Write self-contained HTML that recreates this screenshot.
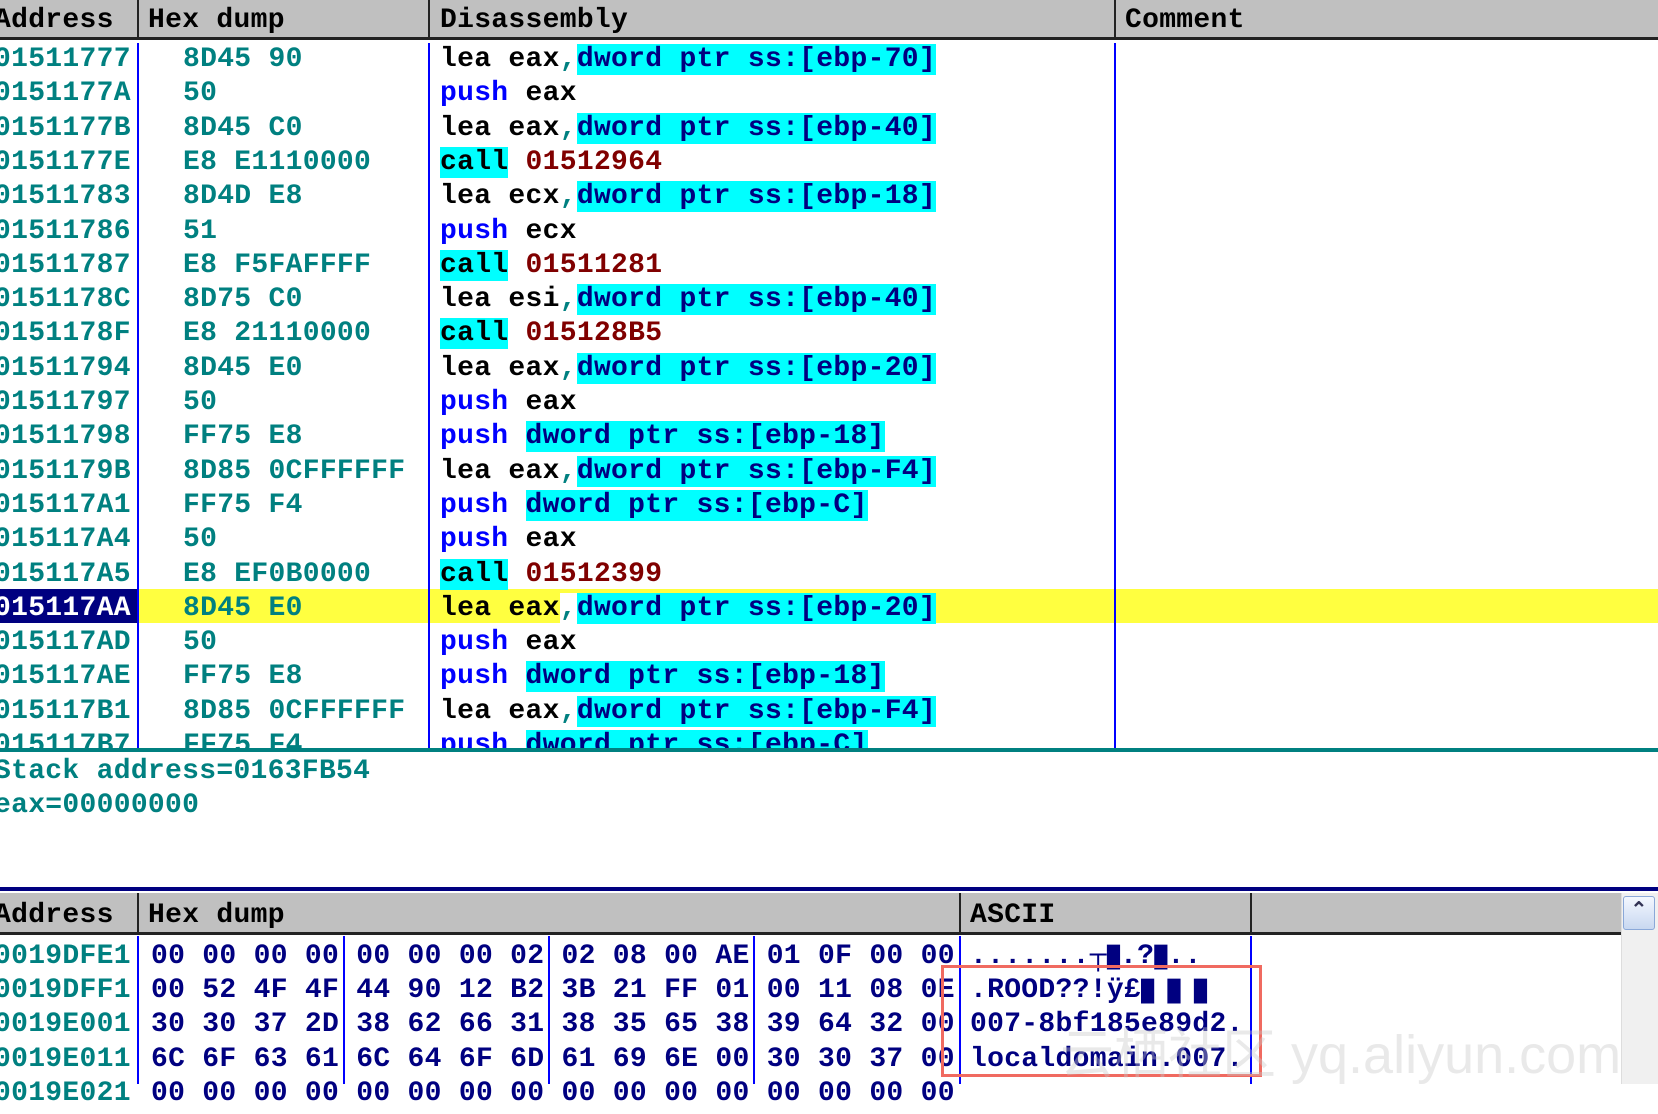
<!DOCTYPE html>
<html><head><meta charset="utf-8"><style>
*{margin:0;padding:0;box-sizing:border-box}
body{width:1658px;height:1084px;overflow:hidden;background:#fff;position:relative;font-family:"Liberation Mono",monospace;font-weight:bold;font-size:28px;letter-spacing:0.3px}
.a{position:absolute;white-space:pre;line-height:40px;height:34px}
.t{color:#008080}.k{color:#000}.b{color:#0000ff}.n{color:#000080}.r{color:#800000}
.c{background:#00ffff;color:#000080}.cc{background:#00ffff;color:#000}
.v{position:absolute;width:2px;background:#0000ff}
.hdr{position:absolute;background:#c0c0c0;height:40px;border-bottom:3px solid #222}
.hs{position:absolute;top:0;width:2px;background:#222}
.blk{font-size:22px;letter-spacing:0}
</style></head><body>
<div class="hdr" style="left:0;top:0;width:1658px"></div>
<div class="hs" style="left:137px;height:40px"></div>
<div class="hs" style="left:428px;height:40px"></div>
<div class="hs" style="left:1114px;height:40px"></div>
<div class="a k" style="left:-6px;top:1px">Address</div>
<div class="a k" style="left:148px;top:1px">Hex dump</div>
<div class="a k" style="left:440px;top:1px">Disassembly</div>
<div class="a k" style="left:1125px;top:1px">Comment</div>
<div style="position:absolute;left:0;top:589px;width:138px;height:34px;background:#000080"></div>
<div style="position:absolute;left:138px;top:589px;width:1520px;height:34px;background:#ffff40"></div>
<div class="v" style="left:137px;top:43px;height:706px"></div>
<div class="v" style="left:428px;top:43px;height:706px"></div>
<div class="v" style="left:1114px;top:43px;height:706px"></div>
<div style="position:absolute;left:0;top:43px;width:1658px;height:706px;overflow:hidden">
<div style="position:relative;top:-43px">
<div class="a t" style="left:-6px;top:40px">01511777</div><div class="a t" style="left:183px;top:40px">8D45 90</div><div class="a k" style="left:440px;top:40px">lea eax<span class="t">,</span><span class="c">dword ptr ss:[ebp-70]</span></div>
<div class="a t" style="left:-6px;top:74px">0151177A</div><div class="a t" style="left:183px;top:74px">50</div><div class="a k" style="left:440px;top:74px"><span class="b">push</span> eax</div>
<div class="a t" style="left:-6px;top:109px">0151177B</div><div class="a t" style="left:183px;top:109px">8D45 C0</div><div class="a k" style="left:440px;top:109px">lea eax<span class="t">,</span><span class="c">dword ptr ss:[ebp-40]</span></div>
<div class="a t" style="left:-6px;top:143px">0151177E</div><div class="a t" style="left:183px;top:143px">E8 E1110000</div><div class="a k" style="left:440px;top:143px"><span class="cc">call</span> <span class="r">01512964</span></div>
<div class="a t" style="left:-6px;top:177px">01511783</div><div class="a t" style="left:183px;top:177px">8D4D E8</div><div class="a k" style="left:440px;top:177px">lea ecx<span class="t">,</span><span class="c">dword ptr ss:[ebp-18]</span></div>
<div class="a t" style="left:-6px;top:212px">01511786</div><div class="a t" style="left:183px;top:212px">51</div><div class="a k" style="left:440px;top:212px"><span class="b">push</span> ecx</div>
<div class="a t" style="left:-6px;top:246px">01511787</div><div class="a t" style="left:183px;top:246px">E8 F5FAFFFF</div><div class="a k" style="left:440px;top:246px"><span class="cc">call</span> <span class="r">01511281</span></div>
<div class="a t" style="left:-6px;top:280px">0151178C</div><div class="a t" style="left:183px;top:280px">8D75 C0</div><div class="a k" style="left:440px;top:280px">lea esi<span class="t">,</span><span class="c">dword ptr ss:[ebp-40]</span></div>
<div class="a t" style="left:-6px;top:314px">0151178F</div><div class="a t" style="left:183px;top:314px">E8 21110000</div><div class="a k" style="left:440px;top:314px"><span class="cc">call</span> <span class="r">015128B5</span></div>
<div class="a t" style="left:-6px;top:349px">01511794</div><div class="a t" style="left:183px;top:349px">8D45 E0</div><div class="a k" style="left:440px;top:349px">lea eax<span class="t">,</span><span class="c">dword ptr ss:[ebp-20]</span></div>
<div class="a t" style="left:-6px;top:383px">01511797</div><div class="a t" style="left:183px;top:383px">50</div><div class="a k" style="left:440px;top:383px"><span class="b">push</span> eax</div>
<div class="a t" style="left:-6px;top:417px">01511798</div><div class="a t" style="left:183px;top:417px">FF75 E8</div><div class="a k" style="left:440px;top:417px"><span class="b">push</span> <span class="c">dword ptr ss:[ebp-18]</span></div>
<div class="a t" style="left:-6px;top:452px">0151179B</div><div class="a t" style="left:183px;top:452px">8D85 0CFFFFFF</div><div class="a k" style="left:440px;top:452px">lea eax<span class="t">,</span><span class="c">dword ptr ss:[ebp-F4]</span></div>
<div class="a t" style="left:-6px;top:486px">015117A1</div><div class="a t" style="left:183px;top:486px">FF75 F4</div><div class="a k" style="left:440px;top:486px"><span class="b">push</span> <span class="c">dword ptr ss:[ebp-C]</span></div>
<div class="a t" style="left:-6px;top:520px">015117A4</div><div class="a t" style="left:183px;top:520px">50</div><div class="a k" style="left:440px;top:520px"><span class="b">push</span> eax</div>
<div class="a t" style="left:-6px;top:555px">015117A5</div><div class="a t" style="left:183px;top:555px">E8 EF0B0000</div><div class="a k" style="left:440px;top:555px"><span class="cc">call</span> <span class="r">01512399</span></div>
<div class="a" style="left:-6px;top:589px;color:#fff">015117AA</div><div class="a t" style="left:183px;top:589px">8D45 E0</div><div class="a k" style="left:440px;top:589px">lea eax<span class="t" style="background:#fff">,</span><span class="c">dword ptr ss:[ebp-20]</span></div>
<div class="a t" style="left:-6px;top:623px">015117AD</div><div class="a t" style="left:183px;top:623px">50</div><div class="a k" style="left:440px;top:623px"><span class="b">push</span> eax</div>
<div class="a t" style="left:-6px;top:657px">015117AE</div><div class="a t" style="left:183px;top:657px">FF75 E8</div><div class="a k" style="left:440px;top:657px"><span class="b">push</span> <span class="c">dword ptr ss:[ebp-18]</span></div>
<div class="a t" style="left:-6px;top:692px">015117B1</div><div class="a t" style="left:183px;top:692px">8D85 0CFFFFFF</div><div class="a k" style="left:440px;top:692px">lea eax<span class="t">,</span><span class="c">dword ptr ss:[ebp-F4]</span></div>
<div class="a t" style="left:-6px;top:726px">015117B7</div><div class="a t" style="left:183px;top:726px">FF75 F4</div><div class="a k" style="left:440px;top:726px"><span class="b">push</span> <span class="c">dword ptr ss:[ebp-C]</span></div>
</div></div>
<div style="position:absolute;left:0;top:748px;width:1658px;height:4px;background:#008080"></div>
<div class="a t" style="left:-6px;top:752px">Stack address=0163FB54</div>
<div class="a t" style="left:-6px;top:786px">eax=00000000</div>
<div style="position:absolute;left:0;top:887px;width:1658px;height:4px;background:#000080"></div>
<div class="hdr" style="left:0;top:893px;width:1621px;height:42px"></div>
<div class="hs" style="left:137px;top:893px;height:42px"></div>
<div class="hs" style="left:959px;top:893px;height:42px"></div>
<div class="hs" style="left:1250px;top:893px;height:42px"></div>
<div class="a k" style="left:-6px;top:896px">Address</div>
<div class="a k" style="left:148px;top:896px">Hex dump</div>
<div class="a k" style="left:970px;top:896px">ASCII</div>
<div style="position:absolute;left:1621px;top:893px;width:37px;height:191px;background:#f0f0f0;border-left:1px solid #ddd"></div>
<div style="position:absolute;left:1623px;top:896px;width:32px;height:34px;background:linear-gradient(#f4f8ff,#c8d8f0);border:1px solid #8aa8d8;border-radius:3px;color:#335;font-size:20px;text-align:center;line-height:30px">&#8963;</div>
<div class="v" style="left:137px;top:936px;height:148px"></div>
<div class="v" style="left:343px;top:936px;height:148px"></div>
<div class="v" style="left:548px;top:936px;height:148px"></div>
<div class="v" style="left:753px;top:936px;height:148px"></div>
<div class="v" style="left:959px;top:936px;height:148px"></div>
<div class="v" style="left:1250px;top:936px;height:148px"></div>
<div class="a t" style="left:-6px;top:937px">0019DFE1</div><div class="a n" style="left:151px;top:937px">00 00 00 00 00 00 00 02 02 08 00 AE 01 0F 00 00</div><div class="a n" style="left:970px;top:937px">.......┬<span class="blk">█</span>.?<span class="blk">█</span>..</div>
<div class="a t" style="left:-6px;top:971px">0019DFF1</div><div class="a n" style="left:151px;top:971px">00 52 4F 4F 44 90 12 B2 3B 21 FF 01 00 11 08 0E</div><div class="a n" style="left:970px;top:971px">.ROOD??!ÿ£<span class="blk">█ █ █</span></div>
<div class="a t" style="left:-6px;top:1005px">0019E001</div><div class="a n" style="left:151px;top:1005px">30 30 37 2D 38 62 66 31 38 35 65 38 39 64 32 00</div><div class="a n" style="left:970px;top:1005px">007-8bf185e89d2.</div>
<div class="a t" style="left:-6px;top:1040px">0019E011</div><div class="a n" style="left:151px;top:1040px">6C 6F 63 61 6C 64 6F 6D 61 69 6E 00 30 30 37 00</div><div class="a n" style="left:970px;top:1040px">localdomain.007.</div>
<div class="a t" style="left:-6px;top:1074px">0019E021</div><div class="a n" style="left:151px;top:1074px">00 00 00 00 00 00 00 00 00 00 00 00 00 00 00 00</div>
<div style="position:absolute;left:941px;top:965px;width:321px;height:112px;border:3px solid #f06a60"></div>
<div style="position:absolute;left:1060px;top:1010px;font-family:'Liberation Sans','Noto Sans CJK SC',sans-serif;font-weight:normal;font-size:54px;color:rgba(200,200,200,0.4);white-space:nowrap;letter-spacing:0">云栖社区 yq.aliyun.com</div>
</body></html>
